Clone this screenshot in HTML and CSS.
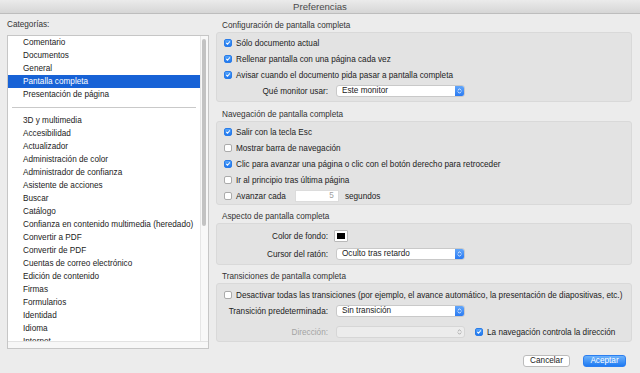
FILE: index.html
```html
<!DOCTYPE html>
<html lang="es">
<head>
<meta charset="utf-8">
<title>Preferencias</title>
<link rel="stylesheet" href="styles.css">
</head>
<body>
<div class="window">
  <div class="titlebar">Preferencias</div>
  <div class="main">
    <div class="left">
      <div class="cat-label">Categorías:</div>
      <div class="listbox">
        <div class="viewport">
          <div class="list">
            <div class="item">Comentario</div>
            <div class="item">Documentos</div>
            <div class="item">General</div>
            <div class="item selected">Pantalla completa</div>
            <div class="item">Presentación de página</div>
            <div class="sep"></div>
            <div class="item">3D y multimedia</div>
            <div class="item">Accesibilidad</div>
            <div class="item">Actualizador</div>
            <div class="item">Administración de color</div>
            <div class="item">Administrador de confianza</div>
            <div class="item">Asistente de acciones</div>
            <div class="item">Buscar</div>
            <div class="item">Catálogo</div>
            <div class="item">Confianza en contenido multimedia (heredado)</div>
            <div class="item">Convertir a PDF</div>
            <div class="item">Convertir de PDF</div>
            <div class="item">Cuentas de correo electrónico</div>
            <div class="item">Edición de contenido</div>
            <div class="item">Firmas</div>
            <div class="item">Formularios</div>
            <div class="item">Identidad</div>
            <div class="item">Idioma</div>
            <div class="item">Internet</div>
          </div>
          <div class="vscroll"><div class="thumb"></div></div>
        </div>
        <div class="hstrip"></div>
      </div>
    </div>

    <div class="right">
      <section class="group">
        <div class="gtitle">Configuración de pantalla completa</div>
        <div class="box box1">
          <div class="row"><span class="cb on"><svg viewBox="0 0 8 8"><path d="M2 4.3 L3.4 5.7 L6.1 2.3"/></svg></span>Sólo documento actual</div>
          <div class="row"><span class="cb on"><svg viewBox="0 0 8 8"><path d="M2 4.3 L3.4 5.7 L6.1 2.3"/></svg></span>Rellenar pantalla con una página cada vez</div>
          <div class="row"><span class="cb on"><svg viewBox="0 0 8 8"><path d="M2 4.3 L3.4 5.7 L6.1 2.3"/></svg></span>Avisar cuando el documento pida pasar a pantalla completa</div>
          <div class="row field">
            <span class="flabel">Qué monitor usar:</span>
            <span class="select"><span class="sval">Este monitor</span><span class="stepper"><svg viewBox="0 0 9 12"><path d="M2.8 5 L4.5 3.3 L6.2 5 M2.8 7 L4.5 8.7 L6.2 7"/></svg></span></span>
          </div>
        </div>
      </section>

      <section class="group">
        <div class="gtitle">Navegación de pantalla completa</div>
        <div class="box box2">
          <div class="row"><span class="cb on"><svg viewBox="0 0 8 8"><path d="M2 4.3 L3.4 5.7 L6.1 2.3"/></svg></span>Salir con la tecla Esc</div>
          <div class="row"><span class="cb"></span>Mostrar barra de navegación</div>
          <div class="row"><span class="cb on"><svg viewBox="0 0 8 8"><path d="M2 4.3 L3.4 5.7 L6.1 2.3"/></svg></span>Clic para avanzar una página o clic con el botón derecho para retroceder</div>
          <div class="row"><span class="cb"></span>Ir al principio tras última página</div>
          <div class="row"><span class="cb"></span>Avanzar cada<span class="num">5</span><span class="unit">segundos</span></div>
        </div>
      </section>

      <section class="group g3">
        <div class="gtitle">Aspecto de pantalla completa</div>
        <div class="box box3">
          <div class="row field tall">
            <span class="flabel">Color de fondo:</span>
            <span class="swatch"><span class="swatch-fill"></span></span>
          </div>
          <div class="row field tall">
            <span class="flabel">Cursor del ratón:</span>
            <span class="select"><span class="sval">Oculto tras retardo</span><span class="stepper"><svg viewBox="0 0 9 12"><path d="M2.8 5 L4.5 3.3 L6.2 5 M2.8 7 L4.5 8.7 L6.2 7"/></svg></span></span>
          </div>
        </div>
      </section>

      <section class="group g4">
        <div class="gtitle">Transiciones de pantalla completa</div>
        <div class="box box4">
          <div class="row"><span class="cb"></span>Desactivar todas las transiciones (por ejemplo, el avance automático, la presentación de diapositivas, etc.)</div>
          <div class="row field">
            <span class="flabel">Transición predeterminada:</span>
            <span class="select"><span class="sval">Sin transición</span><span class="stepper"><svg viewBox="0 0 9 12"><path d="M2.8 5 L4.5 3.3 L6.2 5 M2.8 7 L4.5 8.7 L6.2 7"/></svg></span></span>
          </div>
          <div class="row field tall dir">
            <span class="flabel disabled">Dirección:</span>
            <span class="select off"><span class="sval"></span><span class="stepper"><svg viewBox="0 0 9 12"><path d="M2.8 5 L4.5 3.3 L6.2 5 M2.8 7 L4.5 8.7 L6.2 7"/></svg></span></span>
            <span class="cb on after"><svg viewBox="0 0 8 8"><path d="M2 4.3 L3.4 5.7 L6.1 2.3"/></svg></span>La navegación controla la dirección
          </div>
        </div>
      </section>

      <div class="buttons">
        <button class="btn">Cancelar</button>
        <button class="btn primary">Aceptar</button>
      </div>
    </div>
  </div>
</div>
</body>
</html>
```

FILE: styles.css
```css
* { box-sizing: border-box; }
html, body { margin: 0; padding: 0; }
body {
  width: 640px;
  height: 373px;
  overflow: hidden;
  background: #ececec;
  font-family: "Liberation Sans", Arial, sans-serif;
  font-size: 8.2px;
  color: #222;
}
.window { width: 640px; height: 373px; background: #ececec; }

.titlebar {
  height: 14px;
  line-height: 13px;
  text-align: center;
  font-size: 9.6px;
  color: #4b4b4b;
  background: linear-gradient(#ebebeb, #d6d6d6);
  border-bottom: 1px solid #bdbdbd;
}

.main { display: flex; padding-left: 7px; }

.left { width: 202px; }
.cat-label { margin-top: 6px; height: 10px; line-height: 10px; margin-bottom: 5px; color: #333; }
.listbox {
  height: 314px;
  border: 1px solid #c6c6c6;
  background: #f7f7f7;
}
.viewport { display: flex; height: 305px; }
.list { width: 192px; height: 305px; overflow: hidden; background: #fff; }
.item { height: 13px; line-height: 13px; padding-left: 15px; white-space: nowrap; color: #222; }
.item.selected { background: #1762d6; color: #fff; }
.sep { height: 13px; padding: 6px 4px 0; }
.sep::after { content: ""; display: block; height: 1px; background: #c9c9c9; }
.vscroll { width: 8px; background: #f8f8f8; border-left: 1px solid #e6e6e6; padding: 3px 0 0 1px; }
.thumb { width: 4px; height: 187px; border-radius: 2px; background: #c3c3c3; }
.hstrip { height: 7px; border-top: 1px solid #e2e2e2; background: #f7f7f7; }

.right { width: 416px; margin-left: 7px; padding-top: 7px; }
.group + .group { margin-top: 8px; }
.group.g3, .group.g4 { margin-top: 7px; }
.gtitle { height: 10px; line-height: 10px; margin-bottom: 1px; padding-left: 6px; color: #333; }
.box {
  background: #e3e3e3;
  border: 1px solid #d9d9d9;
  border-radius: 3px;
}
.box1 { padding: 2px 0; }
.box2 { padding: 2px 0 0; }
.box3 { padding: 3px 0 1px; }
.box4 { padding: 3px 0 0; }

.row { display: flex; align-items: center; height: 16px; padding-left: 7px; white-space: nowrap; }
.row.tall { height: 18px; }
.row.dir { margin-top: 4px; }
.field { padding-left: 0; }
.flabel { width: 111px; text-align: right; margin-right: 8px; color: #222; }
.flabel.disabled { color: #a3a3a3; }

.cb {
  width: 8px; height: 8px;
  margin-right: 4px;
  border-radius: 2px;
  background: #fff;
  border: 1px solid #ababab;
  flex: none;
  display: flex;
}
.cb.on { background: linear-gradient(#55a4fa, #1f77ef); border-color: #2a7ce8; }
.cb svg { width: 6px; height: 6px; }
.cb path { fill: none; stroke: #fff; stroke-width: 1.4; stroke-linecap: round; stroke-linejoin: round; }
.cb.after { margin-left: 10px; }

.select {
  display: flex;
  width: 129px; height: 12px;
  background: #fff;
  border: 1px solid #c9c9c9;
  border-radius: 3px;
  overflow: hidden;
}
.sval { flex: 1; padding-left: 5px; line-height: 10px; color: #222; }
.stepper {
  width: 9px; height: 10px;
  background: linear-gradient(#62a6fa, #2a7af2);
  display: flex;
}
.stepper svg { width: 9px; height: 10px; }
.stepper path { fill: none; stroke: #fff; stroke-width: 1; stroke-linecap: round; stroke-linejoin: round; }
.select.off { background: #ececec; border-color: #d6d6d6; }
.select.off .stepper { background: none; }
.select.off .stepper path { stroke: #9c9c9c; }

.num {
  width: 44px; height: 12px;
  margin-left: 9px;
  background: #fff;
  border: 1px solid #dcdcdc;
  text-align: right;
  padding-right: 4px;
  line-height: 10px;
  color: #a0a0a0;
}
.unit { margin-left: 6px; }

.swatch {
  width: 14px; height: 12px;
  margin-left: -2px;
  background: #fff;
  border: 1px solid #b9b9b9;
  border-radius: 1px;
  padding: 2px;
}
.swatch-fill { display: block; width: 100%; height: 100%; background: #000; }

.buttons { display: flex; justify-content: flex-end; gap: 13px; margin-top: 13px; padding-right: 6px; }
.btn {
  height: 12px;
  padding: 0;
  font-family: inherit;
  font-size: 8.2px;
  line-height: 10px;
  border-radius: 3px;
  border: 1px solid #bcbcbc;
  background: #fff;
  color: #222;
}
.btn:first-child { width: 47px; }
.btn.primary {
  width: 43px;
  border-color: #2c7ef0;
  background: linear-gradient(#6cb2fb, #1f7af2);
  color: #fff;
}
```
